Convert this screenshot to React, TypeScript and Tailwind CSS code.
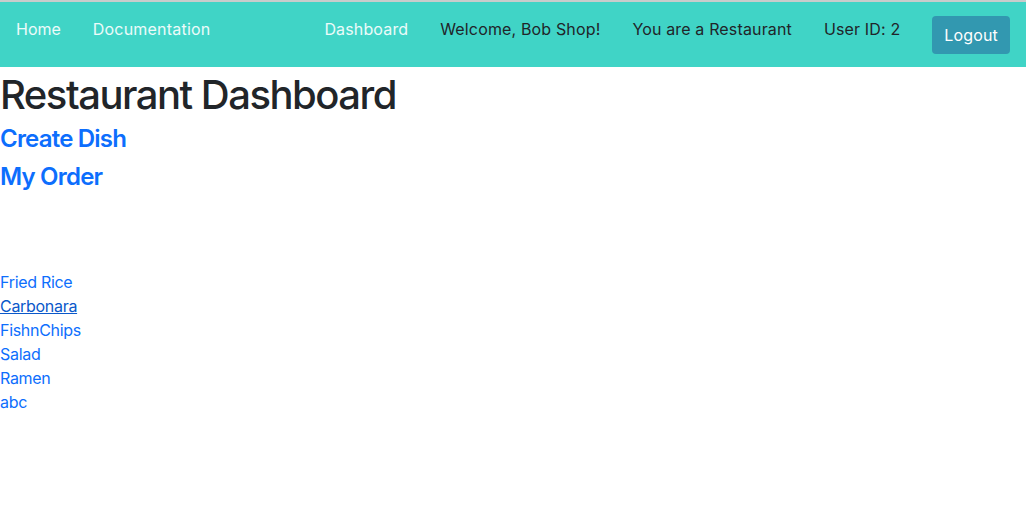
import React from 'react'

const dishes = ['Fried Rice', 'Carbonara', 'FishnChips', 'Salad', 'Ramen', 'abc']

export default function App() {
  return (
    <div className="min-h-[511px] bg-white text-[#212529] font-['Inter','Noto_Sans',sans-serif]">
      {/* Navbar */}
      <nav className="flex h-[67px] items-start border-t-2 border-[#c8cccb] bg-[#40d4c6] pt-[12px] text-base">
        <div className="flex items-start">
          <a href="#" className="mt-[3px] px-4 leading-6 text-white/90">
            Home
          </a>
          <a href="#" className="mt-[3px] px-4 leading-6 tracking-[0.2px] text-white/90">
            Documentation
          </a>
        </div>
        <div className="ml-auto flex items-start pr-4 tracking-[0.15px]">
          <a href="#" className="mt-[3px] px-4 leading-6 text-white/90">
            Dashboard
          </a>
          <span className="mt-[3px] px-4 leading-6 text-[#212529]">Welcome, Bob Shop!</span>
          <span className="mt-[3px] px-4 leading-6 text-[#212529]">You are a Restaurant</span>
          <span className="mt-[3px] px-4 leading-6 text-[#212529]">User ID: 2</span>
          <button className="ml-4 mt-[2px] h-[38px] rounded bg-[#3298b0] px-3 text-white">
            Logout
          </button>
        </div>
      </nav>

      {/* Content */}
      <h1 className="mb-[6px] pt-1 text-[40px] font-medium leading-[1.2] tracking-[-1.5px]">Restaurant Dashboard</h1>
      <h4 className="mb-[9px] text-2xl font-semibold leading-[1.2] tracking-[-0.8px]">
        <a href="#" className="text-[#0d6efd]">
          Create Dish
        </a>
      </h4>
      <h4 className="mb-2 text-2xl font-semibold leading-[1.2] tracking-[-0.8px]">
        <a href="#" className="text-[#0d6efd]">
          My Order
        </a>
      </h4>

      <div className="h-[70px]" />

      <div className="flex flex-col items-start tracking-[-0.3px]">
        {dishes.map((dish) => (
          <a
            key={dish}
            href="#"
            className={
              dish === 'Carbonara'
                ? 'leading-6 text-[#0a58ca] underline'
                : 'leading-6 text-[#0d6efd] no-underline'
            }
          >
            {dish}
          </a>
        ))}
      </div>
    </div>
  )
}
